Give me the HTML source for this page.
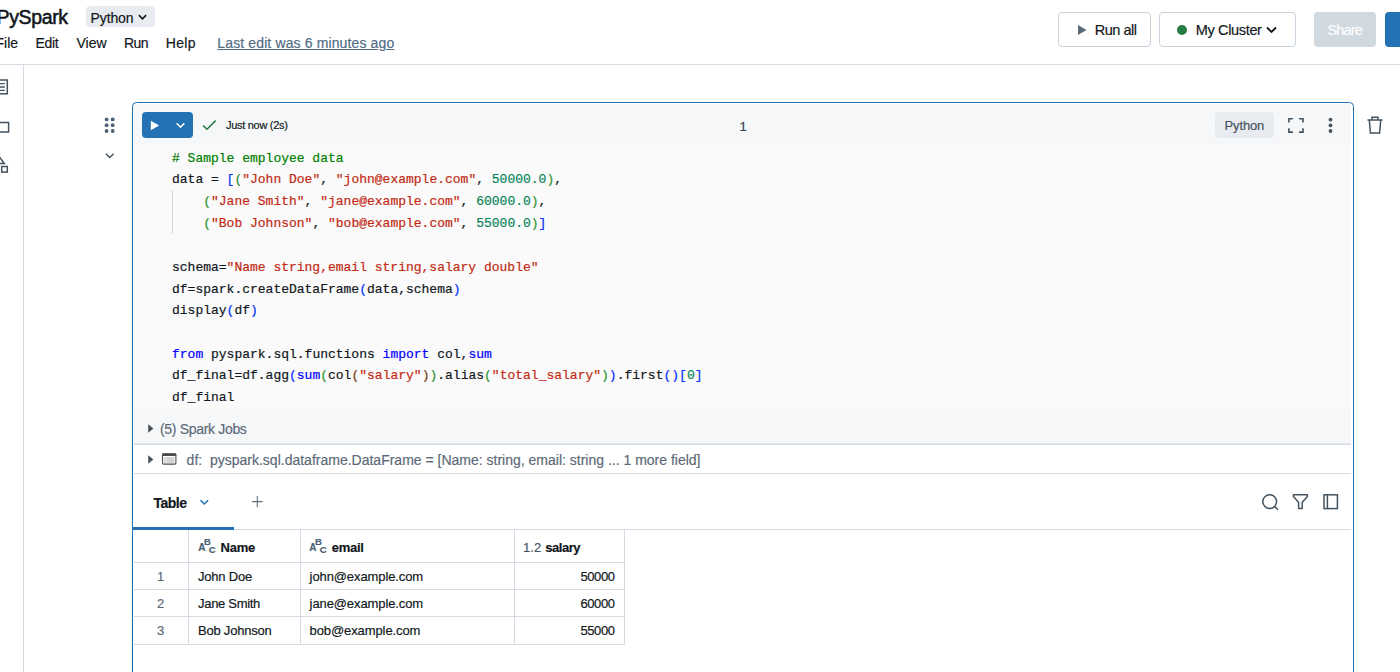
<!DOCTYPE html>
<html>
<head>
<meta charset="utf-8">
<title>PySpark</title>
<style>
  html, body { margin: 0; padding: 0; }
  body {
    width: 1400px; height: 672px; overflow: hidden; position: relative;
    background: #ffffff;
    font-family: "Liberation Sans", sans-serif;
    color: #11171c;
  }
  .abs { position: absolute; white-space: pre; }
  .t { position: absolute; white-space: pre; line-height: 1; -webkit-text-stroke: 0.18px currentColor; }
  /* header */
  #title { left: -3.5px; top: 8px; font-size: 19.5px; font-weight: normal; letter-spacing: -0.36px; color: #11171c; -webkit-text-stroke: 0.55px #11171c; }
  #langpill { left: 86px; top: 6px; width: 69px; height: 21px; background: #e8ecf0; border-radius: 4px; }
  #langtxt { left: 90.5px; top: 10.5px; font-size: 14px; letter-spacing: -0.1px; }
  .menu { top: 36px; font-size: 14px; }
  #lastedit { left: 217.3px; top: 36px; font-size: 14px; letter-spacing: 0.13px; color: #4f6b85; text-decoration: underline; text-underline-offset: 1px; }
  #hline { left: 0; top: 64px; width: 1400px; height: 1px; background: #d5dce4; }
  #sline { left: 23px; top: 64px; width: 1px; height: 608px; background: #d5dce4; }
  .btn { top: 12px; height: 33px; border: 1px solid #c8d2dc; border-radius: 4px; background: #fff; }
  /* cell */
  #cell { left: 132px; top: 102px; width: 1220px; height: 600px; border: 1px solid #2272b4; border-radius: 4.5px; background: #fff; overflow: hidden; }
  #cellhead { left: 1px; top: 1px; width: 1217px; height: 41px; border-radius: 3px 3px 0 0; background: #f5f7f9; }
  #codebg { left: 1px; top: 42px; width: 1217px; height: 264px; background: #fafafa; }
  #runbtn { left: 142px; top: 112px; width: 51px; height: 26px; background: #2272b4; border-radius: 4px; }
  .code { position: absolute; left: 172px; font-family: "Liberation Mono", monospace; font-size: 13px; line-height: 22px; height: 22px; white-space: pre; color: #11171c; letter-spacing: -0.003px; -webkit-text-stroke: 0.2px currentColor; }
  .c { color: #008000; } .s { color: #c22a14; } .n { color: #098658; } .k { color: #0000ff; }
  .b1 { color: #0431fa; } .b2 { color: #319331; } .b3 { color: #7b3814; }
  .grey { color: #5c6a78; }
  .abc { font-size: 10px; font-weight: bold; color: #4a5f73; }
  .gl { position: absolute; background: #d5dce4; }
</style>
</head>
<body>

<!-- ===== top header ===== -->
<div class="t" id="title">PySpark</div>
<div class="abs" id="langpill"></div>
<div class="t" id="langtxt">Python</div>
<svg class="abs" style="left:137px;top:12px" width="12" height="10" viewBox="0 0 12 10"><path d="M1.9 3.1 L5.5 6.9 L9.1 3.1" fill="none" stroke="#11171c" stroke-width="1.6"/></svg>

<div class="t menu" style="left:-4.5px">File</div>
<div class="t menu" style="left:35.5px;letter-spacing:-0.3px">Edit</div>
<div class="t menu" style="left:76.5px">View</div>
<div class="t menu" style="left:124px;letter-spacing:-0.6px">Run</div>
<div class="t menu" style="left:165.8px;letter-spacing:0.3px">Help</div>
<div class="t" id="lastedit">Last edit was 6 minutes ago</div>

<div class="abs btn" style="left:1058px;width:91px"></div>
<svg class="abs" style="left:1077px;top:23px" width="11" height="14" viewBox="0 0 11 14"><path d="M1 2 L9.5 7 L1 12 Z" fill="#5a6b7b"/></svg>
<div class="t" style="left:1094.8px;top:23px;font-size:14.5px;letter-spacing:-0.5px">Run all</div>

<div class="abs btn" style="left:1159px;width:135px"></div>
<div class="abs" style="left:1177px;top:25px;width:10px;height:10px;border-radius:5px;background:#277c43"></div>
<div class="t" style="left:1195.8px;top:23px;font-size:14.5px;letter-spacing:-0.35px">My Cluster</div>
<svg class="abs" style="left:1265px;top:25px" width="13" height="10" viewBox="0 0 13 10"><path d="M2 2.5 L6.5 7 L11 2.5" fill="none" stroke="#11171c" stroke-width="1.8"/></svg>

<div class="abs" style="left:1314px;top:12px;width:62px;height:35px;border-radius:4px;background:#d0d8e0"></div>
<div class="t" style="left:1327.5px;top:23px;font-size:14.5px;letter-spacing:-0.85px;color:#ffffff">Share</div>
<div class="abs" style="left:1385px;top:12px;width:30px;height:35px;border-radius:4px;background:#2272b4"></div>

<div class="abs" id="hline"></div>
<div class="abs" id="sline"></div>

<!-- ===== left sidebar icons ===== -->
<svg class="abs" style="left:0;top:76px" width="12" height="100" viewBox="0 0 12 100" fill="none" stroke="#44535f" stroke-width="1.5">
  <rect x="-4" y="4" width="11.3" height="13.8"/>
  <path d="M-2 7.6 H4.8 M-2 11 H4.8 M-2 14.4 H4.8" stroke-width="1.3"/>
  <rect x="-4" y="46.5" width="12.6" height="9.5"/>
  <path d="M-1 80.5 L4.3 87.5 H-2"/>
  <rect x="1.7" y="90.5" width="5.6" height="5.6"/>
</svg>

<!-- ===== cell gutter ===== -->
<svg class="abs" style="left:103px;top:116px" width="14" height="18" viewBox="0 0 14 18" fill="#4a5f73">
  <circle cx="3.6" cy="3.4" r="1.9"/><circle cx="9.7" cy="3.4" r="1.9"/>
  <circle cx="3.6" cy="9.2" r="1.9"/><circle cx="9.7" cy="9.2" r="1.9"/>
  <circle cx="3.6" cy="15" r="1.9"/><circle cx="9.7" cy="15" r="1.9"/>
</svg>
<svg class="abs" style="left:104px;top:151px" width="12" height="10" viewBox="0 0 12 10"><path d="M2 2.7 L5.8 6.5 L9.6 2.7" fill="none" stroke="#44535f" stroke-width="1.4"/></svg>

<!-- ===== cell ===== -->
<div class="abs" id="cell">
  <div class="abs" id="cellhead"></div>
  <div class="abs" id="codebg"></div>
  <div class="abs" style="left:1px;top:306px;width:1217px;height:35px;background:#f5f7f9"></div>
</div>

<div class="abs" id="runbtn"></div>
<svg class="abs" style="left:150px;top:120px" width="10" height="11" viewBox="0 0 10 11"><path d="M0.8 0.7 L9.2 5.5 L0.8 10.3 Z" fill="#ffffff"/></svg>
<svg class="abs" style="left:175px;top:121px" width="11" height="9" viewBox="0 0 11 9"><path d="M1.6 2.2 L5.5 6.1 L9.4 2.2" fill="none" stroke="#ffffff" stroke-width="1.5"/></svg>
<svg class="abs" style="left:202px;top:119px" width="15" height="12" viewBox="0 0 15 12"><path d="M1.2 6.6 L5 10.3 L13.6 1.6" fill="none" stroke="#277c43" stroke-width="1.5"/></svg>
<div class="t" style="left:226px;top:120px;font-size:11px;letter-spacing:-0.29px">Just now (2s)</div>
<div class="t" style="left:739.5px;top:119.8px;font-size:13px;color:#34424f;-webkit-text-stroke:0.2px #34424f">1</div>

<div class="abs" style="left:1215px;top:112px;width:59px;height:26px;border-radius:4px;background:#e8ecf0"></div>
<div class="t" style="left:1224.5px;top:119px;font-size:13px;letter-spacing:-0.13px;color:#44535f">Python</div>
<svg class="abs" style="left:1287px;top:116px" width="18" height="18" viewBox="0 0 18 18" fill="none" stroke="#44535f" stroke-width="1.6">
  <path d="M1.9 6.6 V2.7 H5.8 M12.1 2.7 H16 V6.6 M16 12.2 V16.1 H12.1 M5.8 16.1 H1.9 V12.2"/>
</svg>
<svg class="abs" style="left:1327px;top:116px" width="8" height="18" viewBox="0 0 8 18" fill="#44535f">
  <circle cx="3.5" cy="3.6" r="1.9"/><circle cx="3.5" cy="9.3" r="1.9"/><circle cx="3.5" cy="15" r="1.9"/>
</svg>
<svg class="abs" style="left:1366px;top:115px" width="18" height="20" viewBox="0 0 18 20" fill="none" stroke="#44535f" stroke-width="1.5">
  <path d="M1.5 5 H16.5 M6 4.8 V2.3 H12 V4.8 M3.3 5 L4.4 18 H13.6 L14.7 5"/>
</svg>

<!-- code -->
<div class="abs" style="left:172px;top:190px;width:1px;height:44px;background:#d3d7db"></div>
<div class="code c" style="top:147.6px"># Sample employee data</div>
<div class="code" style="top:168.6px">data = <span class="b1">[</span><span class="b2">(</span><span class="s">"John Doe"</span>, <span class="s">"john@example.com"</span>, <span class="n">50000.0</span><span class="b2">)</span>,</div>
<div class="code" style="top:190.6px">    <span class="b2">(</span><span class="s">"Jane Smith"</span>, <span class="s">"jane@example.com"</span>, <span class="n">60000.0</span><span class="b2">)</span>,</div>
<div class="code" style="top:212.6px">    <span class="b2">(</span><span class="s">"Bob Johnson"</span>, <span class="s">"bob@example.com"</span>, <span class="n">55000.0</span><span class="b2">)</span><span class="b1">]</span></div>
<div class="code" style="top:256.6px">schema=<span class="s">"Name string,email string,salary double"</span></div>
<div class="code" style="top:278.6px">df=spark.createDataFrame<span class="b1">(</span>data,schema<span class="b1">)</span></div>
<div class="code" style="top:299.6px">display<span class="b1">(</span>df<span class="b1">)</span></div>
<div class="code" style="top:343.6px"><span class="k">from</span> pyspark.sql.functions <span class="k">import</span> col,<span class="k">sum</span></div>
<div class="code" style="top:364.6px">df_final=df.agg<span class="b1">(</span><span class="k">sum</span><span class="b2">(</span>col<span class="b3">(</span><span class="s">"salary"</span><span class="b3">)</span><span class="b2">)</span>.alias<span class="b2">(</span><span class="s">"total_salary"</span><span class="b2">)</span><span class="b1">)</span>.first<span class="b1">()[</span><span class="n">0</span><span class="b1">]</span></div>
<div class="code" style="top:386.6px">df_final</div>

<!-- spark jobs / df rows -->
<svg class="abs" style="left:147px;top:423px" width="8" height="11" viewBox="0 0 8 11"><path d="M1.2 1.2 L6.4 5.5 L1.2 9.8 Z" fill="#4a4f55"/></svg>
<div class="t grey" style="left:160px;top:422px;font-size:14px;letter-spacing:-0.32px">(5) Spark Jobs</div>
<div class="gl" style="left:134px;top:443px;width:1217px;height:1px;opacity:0.55"></div><div class="gl" style="left:134px;top:444px;width:1217px;height:1px"></div>

<svg class="abs" style="left:147px;top:454px" width="8" height="11" viewBox="0 0 8 11"><path d="M1.2 1.2 L6.4 5.5 L1.2 9.8 Z" fill="#44535f"/></svg>
<svg class="abs" style="left:161px;top:452px" width="17" height="14" viewBox="0 0 17 14" fill="none">
  <rect x="1.5" y="1.9" width="13.4" height="10.2" rx="1" fill="#ffffff" stroke="#4d4d4d" stroke-width="1.1"/>
  <rect x="1.2" y="1.4" width="14" height="2.6" rx="0.8" fill="#4d4d4d"/>
  <path d="M3 6 H13.4 M3 8 H13.4 M3 10 H13.4" stroke="#a9a9a9" stroke-width="1.2"/>
  <path d="M5 5 V11" stroke="#e8e8e8" stroke-width="0.8"/>
</svg>
<div class="t grey" style="left:186.6px;top:453px;font-size:14px">df:  pyspark.sql.dataframe.DataFrame = [Name: string, email: string ... 1 more field]</div>
<div class="gl" style="left:134px;top:473px;width:1217px;height:1px"></div>

<!-- tabs -->
<div class="t" style="left:153.5px;top:495.6px;font-size:14px;font-weight:bold;letter-spacing:-0.5px">Table</div>
<svg class="abs" style="left:199px;top:497.7px" width="11" height="9" viewBox="0 0 11 9"><path d="M1.5 2.3 L5.3 6 L9.1 2.3" fill="none" stroke="#2272b4" stroke-width="1.6"/></svg>
<svg class="abs" style="left:251px;top:495px" width="13" height="13" viewBox="0 0 13 13"><path d="M6.3 1 V12.2 M0.9 6.6 H11.7" fill="none" stroke="#5f7281" stroke-width="1.1"/></svg>
<div class="gl" style="left:134px;top:529px;width:1217px;height:1px"></div>
<div class="abs" style="left:133.4px;top:527px;width:100.6px;height:2.6px;background:#2272b4"></div>

<svg class="abs" style="left:1260px;top:492px" width="20" height="20" viewBox="0 0 20 20" fill="none" stroke="#44535f" stroke-width="1.5">
  <circle cx="9.7" cy="9.6" r="6.9"/><path d="M14.8 14.6 L18 17.8"/>
</svg>
<svg class="abs" style="left:1291px;top:492px" width="20" height="20" viewBox="0 0 20 20" fill="none" stroke="#44535f" stroke-width="1.5">
  <path d="M2.4 2.8 H16.4 V4.6 L11.2 10.2 V16.6 H7.6 V10.2 L2.4 4.6 Z" stroke-linejoin="round"/>
</svg>
<svg class="abs" style="left:1321px;top:492px" width="20" height="20" viewBox="0 0 20 20" fill="none" stroke="#44535f" stroke-width="1.5">
  <rect x="3" y="2.8" width="13.4" height="13.8"/><path d="M6.4 2.8 V16.6"/>
</svg>

<!-- table -->
<div class="gl" style="left:134px;top:562px;width:491px;height:1px"></div>
<div class="gl" style="left:134px;top:589px;width:491px;height:1px"></div>
<div class="gl" style="left:134px;top:616px;width:491px;height:1px"></div>
<div class="gl" style="left:134px;top:644px;width:491px;height:1px"></div>
<div class="gl" style="left:188px;top:530px;width:1px;height:114px"></div>
<div class="gl" style="left:300px;top:530px;width:1px;height:114px"></div>
<div class="gl" style="left:514px;top:530px;width:1px;height:114px"></div>
<div class="gl" style="left:624px;top:530px;width:1px;height:114px"></div>

<!-- header cells -->
<div class="t abc" style="left:198.3px;top:543px">A</div>
<div class="t abc" style="left:204.0px;top:537.3px;font-size:9.5px">B</div>
<div class="t abc" style="left:208.7px;top:545px;font-size:9.5px">C</div>
<div class="t" style="left:220.6px;top:541px;font-size:13px;font-weight:bold;letter-spacing:-0.28px">Name</div>

<div class="t abc" style="left:309.3px;top:543px">A</div>
<div class="t abc" style="left:315.0px;top:537.3px;font-size:9.5px">B</div>
<div class="t abc" style="left:319.7px;top:545px;font-size:9.5px">C</div>
<div class="t" style="left:331.8px;top:541px;font-size:13px;font-weight:bold;letter-spacing:-0.3px">email</div>

<div class="t" style="left:523px;top:540.5px;font-size:13px;letter-spacing:0.1px;color:#44535f">1.2</div>
<div class="t" style="left:545.3px;top:541px;font-size:13px;font-weight:bold;letter-spacing:-0.48px">salary</div>

<!-- rows -->
<div class="t grey" style="left:133px;width:55px;text-align:center;top:570px;font-size:13px">1</div>
<div class="t grey" style="left:133px;width:55px;text-align:center;top:597px;font-size:13px">2</div>
<div class="t grey" style="left:133px;width:55px;text-align:center;top:624.4px;font-size:13px">3</div>

<div class="t" style="left:198px;top:570px;font-size:13px;letter-spacing:-0.2px">John Doe</div>
<div class="t" style="left:198px;top:597px;font-size:13px;letter-spacing:-0.3px">Jane Smith</div>
<div class="t" style="left:198px;top:624.4px;font-size:13px;letter-spacing:-0.22px">Bob Johnson</div>

<div class="t" style="left:309.6px;top:570px;font-size:13px;letter-spacing:-0.1px">john@example.com</div>
<div class="t" style="left:309.6px;top:597px;font-size:13px;letter-spacing:-0.1px">jane@example.com</div>
<div class="t" style="left:309.6px;top:624.4px;font-size:13px;letter-spacing:-0.1px">bob@example.com</div>

<div class="t" style="left:540px;width:74.6px;letter-spacing:-0.4px;text-align:right;top:570px;font-size:13px">50000</div>
<div class="t" style="left:540px;width:74.6px;letter-spacing:-0.4px;text-align:right;top:597px;font-size:13px">60000</div>
<div class="t" style="left:540px;width:74.6px;letter-spacing:-0.4px;text-align:right;top:624.4px;font-size:13px">55000</div>

</body>
</html>
